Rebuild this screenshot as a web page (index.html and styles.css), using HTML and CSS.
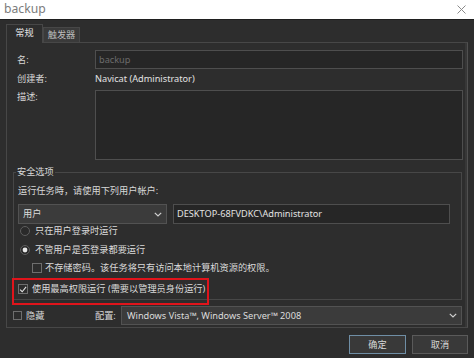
FILE: index.html
```html
<!DOCTYPE html>
<html lang="zh-CN">
<head>
<meta charset="utf-8">
<title>backup</title>
<link rel="stylesheet" href="styles.css">
</head>
<body>
<div class="titlebar">
  <span class="title">backup</span>
  <svg class="close" width="9" height="9" viewBox="0 0 9 9"><path d="M0.5 0.5 L8.5 8.5 M8.5 0.5 L0.5 8.5" stroke="#8a8a8a" stroke-width="1" fill="none"/></svg>
</div>
<div class="dialog">
  <div class="tabs">
    <div class="tab active">常规</div>
    <div class="tab">触发器</div>
  </div>
  <div class="panel">
    <div class="form">
      <div class="label">名:</div>
      <div class="input placeholder">backup</div>
      <div class="label">创建者:</div>
      <div class="value">Navicat (Administrator)</div>
      <div class="label top">描述:</div>
      <div class="textarea"></div>
    </div>
    <div class="group">
      <div class="legend">安全选项</div>
      <div class="line">运行任务時，请使用下列用户帐户:</div>
      <div class="account">
        <div class="select user"><span>用户</span><svg width="8" height="5" viewBox="0 0 8 5"><path d="M0.8 0.8 L4 4 L7.2 0.8" stroke="#d0d0d0" stroke-width="1.2" fill="none"/></svg></div>
        <div class="input account-name">DESKTOP-68FVDKC\Administrator</div>
      </div>
      <div class="option">
        <svg class="radio" width="10" height="10" viewBox="0 0 10 10"><circle cx="5" cy="5" r="4.5" fill="#2a2a2a" stroke="#5e5e5e"/></svg>
        <span>只在用户登录时运行</span>
      </div>
      <div class="option opt2">
        <svg class="radio" width="10" height="10" viewBox="0 0 10 10"><circle cx="5" cy="5" r="4.5" fill="#2a2a2a" stroke="#5e5e5e"/><circle cx="5" cy="5" r="2.4" fill="#e8e8e8"/></svg>
        <span>不管用户是否登录都要运行</span>
      </div>
      <div class="option sub">
        <span class="check"></span>
        <span>不存储密码。该任务将只有访问本地计算机资源的权限。</span>
      </div>
      <div class="option highest">
        <span class="check"><svg width="9" height="9" viewBox="0 0 9 9"><path d="M1.2 4.6 L3.6 7 L8 1.6" stroke="#e6e6e6" stroke-width="1.2" fill="none"/></svg></span>
        <span>使用最高权限运行 (需要以管理员身份运行)</span>
      </div>
    </div>
    <div class="bottom-row">
      <div class="hidden-opt"><span class="check"></span><span>隐藏</span></div>
      <div class="config-label">配置:</div>
      <div class="select config"><span>Windows Vista™, Windows Server™ 2008</span><svg width="8" height="5" viewBox="0 0 8 5"><path d="M0.8 0.8 L4 4 L7.2 0.8" stroke="#d0d0d0" stroke-width="1.2" fill="none"/></svg></div>
    </div>
  </div>
  <div class="buttons">
    <div class="btn primary">确定</div>
    <div class="btn">取消</div>
  </div>
</div>
</body>
</html>
```
FILE: styles.css
```css
* { box-sizing: border-box; }
html, body { margin: 0; padding: 0; }
body {
  width: 474px;
  height: 358px;
  overflow: hidden;
  background: #2d2d2d;
  color: #d8d8d8;
  font-family: "Noto Sans", "Noto Sans CJK SC", sans-serif;
  font-size: 9.2px;
  line-height: 14px;
}
.titlebar {
  height: 20px;
  background: #ffffff;
  border-bottom: 1px solid #1f1f1f;
  display: flex;
  align-items: center;
  justify-content: space-between;
  padding: 0 8px 1px 4px;
}
.title { color: #7c7c7c; font-size: 12.2px; }
.dialog { padding: 4px 6px 0 6px; }
.tabs { display: flex; align-items: flex-end; height: 18px; }
.tab {
  width: 37px;
  height: 15px;
  background: #3a3a3a;
  border: 1px solid #474747;
  border-bottom: none;
  color: #bdbdbd;
  display: flex;
  align-items: center;
  justify-content: center;
}
.tab.active {
  height: 19px;
  margin-bottom: -1px;
  background: #2d2d2d;
  position: relative;
  z-index: 1;
  color: #e2e2e2;
  padding-bottom: 2px;
}
.panel {
  height: 286px;
  border: 1px solid #474747;
  border-right: 1px solid #505050;
  box-shadow: inset -2px 0 0 #373737;
  padding-top: 7px;
}
.form {
  margin: 0 4px 0 10px;
  display: grid;
  grid-template-columns: 78px 1fr;
  grid-template-rows: 19px 19px 72px;
}
.label { display: flex; align-items: center; color: #d6d6d6; }
.label.top { align-items: flex-start; padding-top: 2px; }
.input {
  background: #262626;
  border: 1px solid #4e4e4e;
  padding-left: 3px;
  display: flex;
  align-items: center;
  color: #e2e2e2;
}
.placeholder { color: #6c6c6c; }
.value { display: flex; align-items: center; color: #e2e2e2; }
.textarea {
  margin-top: 2px;
  height: 70px;
  background: #262626;
  border: 1px solid #4e4e4e;
}
.group {
  margin: 12px 5px 0 6px;
  border: 1px solid #474747;
  padding: 0 4px 3px 4px;
}
.legend {
  width: fit-content;
  margin: -8px 0 0 -2px;
  padding: 0 1px;
  background: #2d2d2d;
  color: #d8d8d8;
}
.line { margin-top: 5px; }
.account { display: flex; gap: 6px; margin-top: 6px; height: 20px; }
.select {
  background: #3b3b3b;
  border: 1px solid #525252;
  display: flex;
  align-items: center;
  justify-content: space-between;
  padding: 0 4px 0 4px;
  color: #dcdcdc;
}
.user { width: 149px; }
.account-name { width: 277px; }
.option { display: flex; align-items: center; height: 14px; gap: 5px; color: #dadada; }
.radio { margin-left: 2px; }
.opt2 { margin-top: 5px; }
.sub { margin-top: 4px; padding-left: 14px; gap: 3px; }
.check {
  width: 10px;
  height: 10px;
  border: 1px solid #6e6e6e;
  display: flex;
  align-items: center;
  justify-content: center;
}
.highest { margin-top: 7px; position: relative; gap: 4px; }
.highest::before {
  content: "";
  position: absolute;
  left: -6px;
  top: -4px;
  width: 193px;
  height: 23px;
  border: 2px solid #e0141b;
}
.bottom-row {
  display: flex;
  align-items: center;
  height: 19px;
  margin: 6px 5px 0 6px;
}
.hidden-opt { display: flex; align-items: center; gap: 4px; width: 82px; }
.hidden-opt .check { width: 9px; height: 9px; }
.config-label { width: 26px; }
.config { flex: 1; height: 19px; padding-left: 5px; }
.buttons { display: flex; justify-content: flex-end; gap: 6px; margin-top: 7px; }
.btn {
  width: 56px;
  height: 19px;
  background: #393939;
  border: 1px solid #5a5a5a;
  display: flex;
  align-items: center;
  justify-content: center;
  color: #d8d8d8;
}
.btn.primary { border-color: #6f8ea5; width: 57px; }
```
